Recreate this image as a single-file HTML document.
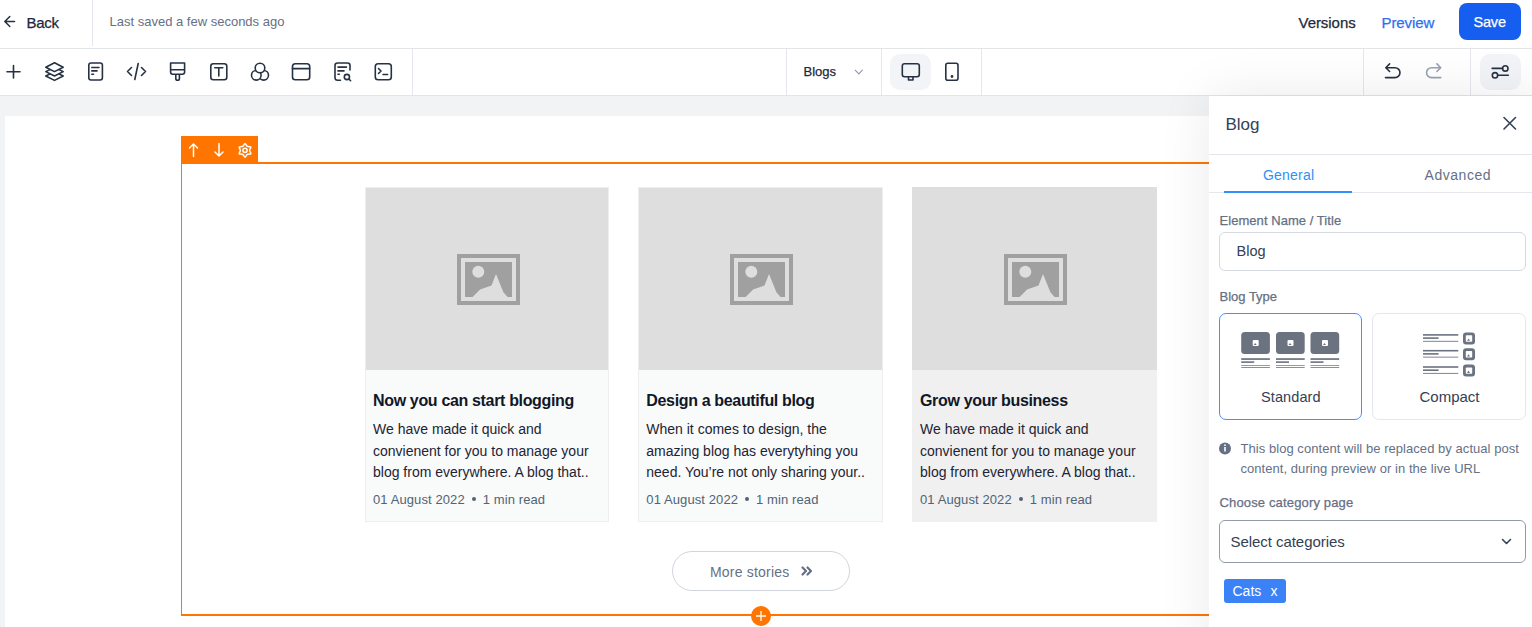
<!DOCTYPE html><html><head><meta charset="utf-8"><style>
html,body{margin:0;padding:0;width:1532px;height:627px;overflow:hidden;background:#fff;font-family:"Liberation Sans",sans-serif;}
.t{position:absolute;white-space:nowrap;}
.r{position:absolute;box-sizing:border-box;}
svg{position:absolute;overflow:visible;}
</style></head><body>

<div class="r" style="left:0px;top:96px;width:1532px;height:531px;background:#f2f3f5;"></div>
<div class="r" style="left:5px;top:116px;width:1520px;height:511px;background:#fff;"></div>
<div class="r" style="left:181px;top:162px;width:1160px;height:454px;border:2px solid #ff7500;border-left:1.3px solid #ff7500;border-right:none;"></div>
<div class="r" style="left:181px;top:136px;width:77px;height:27px;background:#ff7500;"></div>
<div class="r" style="left:365px;top:187px;width:244px;height:335px;background:#f9fafa;border:1px solid #eeeeee;"></div>
<div class="r" style="left:366px;top:188px;width:242px;height:182px;background:#dedede;"></div>
<svg style="left:456.5px;top:254px" width="63" height="51" viewBox="0 0 63 51"><rect x="2" y="2" width="59" height="47" fill="none" stroke="#a0a0a0" stroke-width="4"/><rect x="8" y="8" width="47" height="35" fill="#a0a0a0"/><circle cx="21.3" cy="17.8" r="6" fill="#dedede"/><path d="M15.6 43 L23.1 35.4 L34.5 31.5 L39 20 L46.4 38.2 L50.6 43 Z" fill="#dedede"/></svg>
<div class="t" style="left:373px;top:389.96px;font-size:16px;line-height:21px;color:#101828;font-weight:700;letter-spacing:-0.34px;">Now you can start blogging</div>
<div class="t" style="left:373px;top:420.15px;font-size:14px;line-height:18px;color:#1d2433;font-weight:400;">We have made it quick and</div>
<div class="t" style="left:373px;top:441.55px;font-size:14px;line-height:18px;color:#1d2433;font-weight:400;">convienent for you to manage your</div>
<div class="t" style="left:373px;top:462.95px;font-size:14px;line-height:18px;color:#1d2433;font-weight:400;">blog from everywhere. A blog that..</div>
<div class="t" style="left:373px;top:490.50px;font-size:13px;line-height:17px;color:#4f6475;font-weight:400;letter-spacing:0.1px;">01 August 2022<span style="display:inline-block;width:4px;height:4px;border-radius:2px;background:#4f6475;margin:0 7px 0 7px;vertical-align:3px"></span>1 min read</div>
<div class="r" style="left:638.3px;top:187px;width:244.7px;height:335px;background:#f9fafa;border:1px solid #eeeeee;"></div>
<div class="r" style="left:639.3px;top:188px;width:242.7px;height:182px;background:#dedede;"></div>
<svg style="left:730.1px;top:254px" width="63" height="51" viewBox="0 0 63 51"><rect x="2" y="2" width="59" height="47" fill="none" stroke="#a0a0a0" stroke-width="4"/><rect x="8" y="8" width="47" height="35" fill="#a0a0a0"/><circle cx="21.3" cy="17.8" r="6" fill="#dedede"/><path d="M15.6 43 L23.1 35.4 L34.5 31.5 L39 20 L46.4 38.2 L50.6 43 Z" fill="#dedede"/></svg>
<div class="t" style="left:646.3px;top:389.96px;font-size:16px;line-height:21px;color:#101828;font-weight:700;letter-spacing:-0.34px;">Design a beautiful blog</div>
<div class="t" style="left:646.3px;top:420.15px;font-size:14px;line-height:18px;color:#1d2433;font-weight:400;">When it comes to design, the</div>
<div class="t" style="left:646.3px;top:441.55px;font-size:14px;line-height:18px;color:#1d2433;font-weight:400;">amazing blog has everytyhing you</div>
<div class="t" style="left:646.3px;top:462.95px;font-size:14px;line-height:18px;color:#1d2433;font-weight:400;">need. You’re not only sharing your..</div>
<div class="t" style="left:646.3px;top:490.50px;font-size:13px;line-height:17px;color:#4f6475;font-weight:400;letter-spacing:0.1px;">01 August 2022<span style="display:inline-block;width:4px;height:4px;border-radius:2px;background:#4f6475;margin:0 7px 0 7px;vertical-align:3px"></span>1 min read</div>
<div class="r" style="left:912px;top:187px;width:244.5px;height:335px;background:#f0f0f0;"></div>
<div class="r" style="left:912px;top:187px;width:244.5px;height:183px;background:#dedede;"></div>
<svg style="left:1003.8px;top:254px" width="63" height="51" viewBox="0 0 63 51"><rect x="2" y="2" width="59" height="47" fill="none" stroke="#a0a0a0" stroke-width="4"/><rect x="8" y="8" width="47" height="35" fill="#a0a0a0"/><circle cx="21.3" cy="17.8" r="6" fill="#dedede"/><path d="M15.6 43 L23.1 35.4 L34.5 31.5 L39 20 L46.4 38.2 L50.6 43 Z" fill="#dedede"/></svg>
<div class="t" style="left:920px;top:389.96px;font-size:16px;line-height:21px;color:#101828;font-weight:700;letter-spacing:-0.34px;">Grow your business</div>
<div class="t" style="left:920px;top:420.15px;font-size:14px;line-height:18px;color:#1d2433;font-weight:400;">We have made it quick and</div>
<div class="t" style="left:920px;top:441.55px;font-size:14px;line-height:18px;color:#1d2433;font-weight:400;">convienent for you to manage your</div>
<div class="t" style="left:920px;top:462.95px;font-size:14px;line-height:18px;color:#1d2433;font-weight:400;">blog from everywhere. A blog that..</div>
<div class="t" style="left:920px;top:490.50px;font-size:13px;line-height:17px;color:#4f6475;font-weight:400;letter-spacing:0.1px;">01 August 2022<span style="display:inline-block;width:4px;height:4px;border-radius:2px;background:#4f6475;margin:0 7px 0 7px;vertical-align:3px"></span>1 min read</div>
<div class="r" style="left:672px;top:551px;width:178px;height:40px;border:1px solid #d0d5dd;border-radius:20px;background:#fff;"></div>
<div class="t" style="left:710px;top:563.15px;font-size:14px;line-height:18px;color:#667085;font-weight:400;letter-spacing:0.2px;">More stories</div>
<svg style="left:800.5px;top:566px" width="12" height="10" viewBox="0 0 12 10"><path d="M1.5 1.5 L5 5 L1.5 8.5 M6.5 1.5 L10 5 L6.5 8.5" fill="none" stroke="#667085" stroke-width="2.2" stroke-linecap="round" stroke-linejoin="round"/></svg>
<svg style="left:751px;top:605.5px" width="20" height="20" viewBox="0 0 20 20"><circle cx="10" cy="10" r="10" fill="#ff7500"/><path d="M10 5 V15 M5 10 H15" stroke="#fff" stroke-width="1.3"/></svg>
<svg style="left:181px;top:136px" width="77" height="27" viewBox="0 0 77 27"><g fill="none" stroke="#fff" stroke-width="1.5" stroke-linecap="round" stroke-linejoin="round"><path d="M12.5 20.5 V8 M8.5 12 L12.5 8 L16.5 12"/><path d="M38 7.5 V20 M34 16 L38 20 L42 16"/><path d="M64.00 7.60 C64.69 7.60 65.42 9.91 66.30 10.42 C67.18 10.93 69.54 10.40 69.89 11.00 C70.23 11.60 68.60 13.38 68.60 14.40 C68.60 15.42 70.23 17.20 69.89 17.80 C69.54 18.40 67.18 17.87 66.30 18.38 C65.42 18.89 64.69 21.20 64.00 21.20 C63.31 21.20 62.58 18.89 61.70 18.38 C60.82 17.87 58.46 18.40 58.11 17.80 C57.77 17.20 59.40 15.42 59.40 14.40 C59.40 13.38 57.77 11.60 58.11 11.00 C58.46 10.40 60.82 10.93 61.70 10.42 C62.58 9.91 63.31 7.60 64.00 7.60 Z"/><circle cx="64" cy="14.3" r="2.1"/></g></svg>
<div class="r" style="left:0px;top:0px;width:1532px;height:49px;background:#fff;border-bottom:1px solid #e3e4e6;"></div>
<div class="r" style="left:0px;top:49px;width:1532px;height:47px;background:#fff;border-bottom:1px solid #e3e4e6;"></div>
<div class="r" style="left:92px;top:0px;width:1px;height:46px;background:#e4e7ec;"></div>
<svg style="left:0;top:0" width="30" height="48" viewBox="0 0 30 48"><path d="M14.5 21.5 H4.8 M9.8 16.5 L4.8 21.5 L9.8 26.5" fill="none" stroke="#263244" stroke-width="1.5" stroke-linecap="round" stroke-linejoin="round"/></svg>
<div class="t" style="left:26.5px;top:12.80px;font-size:15px;line-height:20px;color:#1d2939;font-weight:400;letter-spacing:-0.3px;-webkit-text-stroke:0.25px;">Back</div>
<div class="t" style="left:109.5px;top:13.00px;font-size:13px;line-height:17px;color:#667085;font-weight:400;">Last saved a few seconds ago</div>
<div class="t" style="left:1298.5px;top:12.80px;font-size:15px;line-height:20px;color:#1d2939;font-weight:400;letter-spacing:-0.05px;-webkit-text-stroke:0.25px;">Versions</div>
<div class="t" style="left:1381.5px;top:12.80px;font-size:15px;line-height:20px;color:#2f6fed;font-weight:400;letter-spacing:-0.1px;-webkit-text-stroke:0.25px;">Preview</div>
<div class="r" style="left:1459px;top:3px;width:62px;height:37px;background:#155eef;border-radius:8px;"></div>
<div class="t" style="left:1473.5px;top:13.48px;font-size:14.5px;line-height:19px;color:#fff;font-weight:400;letter-spacing:-0.2px;-webkit-text-stroke:0.25px;">Save</div>
<div class="r" style="left:412px;top:49px;width:1px;height:46px;background:#e4e7ec;"></div>
<div class="r" style="left:786px;top:49px;width:1px;height:46px;background:#e4e7ec;"></div>
<div class="r" style="left:881px;top:49px;width:1px;height:46px;background:#e4e7ec;"></div>
<div class="r" style="left:981px;top:49px;width:1px;height:46px;background:#e4e7ec;"></div>
<div class="r" style="left:1363px;top:49px;width:1px;height:46px;background:#e4e7ec;"></div>
<div class="r" style="left:1470px;top:49px;width:1px;height:46px;background:#e4e7ec;"></div>
<div class="r" style="left:890px;top:54px;width:41px;height:36px;background:#f2f4f7;border-radius:10px;"></div>
<div class="r" style="left:1480px;top:54px;width:41px;height:36px;background:#f2f4f7;border-radius:10px;"></div>
<div class="t" style="left:803.5px;top:63.00px;font-size:13px;line-height:17px;color:#1d2939;font-weight:400;-webkit-text-stroke:0.25px;">Blogs</div>
<svg style="left:853px;top:68px" width="12" height="8" viewBox="0 0 12 8"><path d="M2.2 2.2 L5.8 5.8 L9.4 2.2" fill="none" stroke="#8d97a6" stroke-width="1.1" stroke-linecap="round" stroke-linejoin="round"/></svg>
<svg style="left:0;top:0" width="1532" height="96" viewBox="0 0 1532 96"><g fill="none" stroke="#263244" stroke-width="1.6" stroke-linecap="round" stroke-linejoin="round"><path d="M13.5 65.5 V78 M7 71.8 H20"/><path fill="#fff" d="M54.5 71.6 L63.2 76.0 L54.5 80.4 L45.8 76.0 Z"/><path fill="#fff" d="M54.5 67.2 L63.2 71.6 L54.5 76.0 L45.8 71.6 Z"/><path fill="#fff" d="M54.5 62.8 L63.2 67.2 L54.5 71.6 L45.8 67.2 Z"/><rect x="88.8" y="63" width="13.6" height="17" rx="2.2"/><path d="M91.8 67.5 H99 M91.8 70.9 H97 M91.8 74.3 H93.5"/><path d="M131.5 67.5 L127.5 71.5 L131.5 75.5 M141.5 67.5 L145.5 71.5 L141.5 75.5 M138.2 63.5 L134.8 79.5"/><path d="M170.6 63 H184.6 V72 Q184.6 74.2 182.4 74.2 H172.8 Q170.6 74.2 170.6 72 Z M170.6 69.8 H184.6 M175.8 74.2 V78.5 Q175.8 80.3 177.6 80.3 Q179.4 80.3 179.4 78.5 V74.2"/><rect x="210.8" y="63.8" width="16" height="16" rx="2.5"/><path d="M214.8 67.8 H222.8 M218.8 67.8 V76"/><circle cx="263.7" cy="75.3" r="4.8" fill="#fff"/><circle cx="256.3" cy="75.3" r="4.8" fill="#fff"/><circle cx="260" cy="68" r="4.8" fill="#fff"/><rect x="292.5" y="63.8" width="17.2" height="16" rx="2.8"/><path d="M292.5 68.6 H309.7"/><path d="M350 70 V65.5 Q350 63 347.5 63 H337.5 Q335 63 335 65.5 V77.5 Q335 80.2 337.5 80.2 H340.5"/><path d="M338 67.1 H346.5 M338 70.9 H344 M338 74.3 H339.3"/><circle cx="346.9" cy="77" r="2.6"/><path d="M348.9 79 L350.6 80.7"/><rect x="375.3" y="63.8" width="16" height="16" rx="2.8"/><path d="M378.5 68.5 L381 71 L378.5 73.5 M383 74.5 H387.6"/><rect x="902.3" y="63.8" width="17" height="13" rx="2.2"/><path d="M908.5 77 V80 H913 V77"/><rect x="945.8" y="63.3" width="12.2" height="17" rx="2"/><circle cx="952" cy="76.5" r="0.6" fill="#263244"/><path d="M1386 67.7 H1395 A4.95 4.95 0 0 1 1395 77.6 H1385.5 M1389.6 63.9 L1385.8 67.7 L1389.6 71.5"/></g><g fill="none" stroke="#98a2b3" stroke-width="1.6" stroke-linecap="round" stroke-linejoin="round"><path d="M1440.5 67.7 H1431.5 A4.95 4.95 0 0 0 1431.5 77.6 H1440.8 M1436.9 63.9 L1440.7 67.7 L1436.9 71.5"/></g><g fill="none" stroke="#263244" stroke-width="1.6" stroke-linecap="round"><path d="M1492.2 68.4 H1502.5 M1497.7 75.3 H1508.3"/><circle cx="1505.3" cy="68.4" r="2.7"/><circle cx="1495" cy="75.3" r="2.7"/></g></svg>
<div class="r" style="left:1209px;top:96px;width:340px;height:560px;background:#fff;box-shadow:0 0 50px rgba(0,0,0,0.085);"></div>
<div class="t" style="left:1225.5px;top:114.11px;font-size:17px;line-height:22px;color:#344054;font-weight:400;">Blog</div>
<svg style="left:1500px;top:114px" width="20" height="20" viewBox="0 0 20 20"><path d="M4 3.5 L15.5 15 M15.5 3.5 L4 15" stroke="#344054" stroke-width="1.6" stroke-linecap="round"/></svg>
<div class="r" style="left:1209px;top:154px;width:323px;height:1px;background:#e4e7ec;"></div>
<div class="t" style="left:1263px;top:165.65px;font-size:14px;line-height:18px;color:#2e90fa;font-weight:400;letter-spacing:0.2px;">General</div>
<div class="t" style="left:1424.5px;top:165.65px;font-size:14px;line-height:18px;color:#667085;font-weight:400;letter-spacing:0.55px;">Advanced</div>
<div class="r" style="left:1209px;top:192px;width:323px;height:1px;background:#e4e7ec;"></div>
<div class="r" style="left:1224px;top:191px;width:128px;height:2px;background:#2e90fa;"></div>
<div class="t" style="left:1219.5px;top:212.00px;font-size:13px;line-height:17px;color:#667085;font-weight:400;letter-spacing:0.05px;-webkit-text-stroke:0.25px;">Element Name / Title</div>
<div class="r" style="left:1219px;top:232px;width:307px;height:39px;border:1px solid #d5d9e0;border-radius:6px;"></div>
<div class="t" style="left:1236.5px;top:242.48px;font-size:14.5px;line-height:19px;color:#344054;font-weight:400;">Blog</div>
<div class="t" style="left:1219.5px;top:288.00px;font-size:13px;line-height:17px;color:#667085;font-weight:400;-webkit-text-stroke:0.25px;">Blog Type</div>
<div class="r" style="left:1219px;top:313px;width:143px;height:107px;border:1.5px solid #528bf7;border-radius:7px;"></div>
<div class="r" style="left:1372px;top:313px;width:154px;height:107px;border:1px solid #e4e7ec;border-radius:7px;"></div>
<div class="t" style="left:1261px;top:387.98px;font-size:14.5px;line-height:19px;color:#344054;font-weight:400;letter-spacing:0.1px;">Standard</div>
<div class="t" style="left:1419.5px;top:386.80px;font-size:15px;line-height:20px;color:#344054;font-weight:400;">Compact</div>
<svg style="left:0;top:0" width="1532" height="627" viewBox="0 0 1532 627"><rect x="1241.2" y="332" width="28.7" height="22" rx="3.5" fill="#6b7280"/><rect x="1252.7" y="340" width="6" height="6" rx="1" fill="#fff"/><path d="M1253.7 345 L1255.2 343 L1256.7 345 Z" fill="#6b7280"/><rect x="1241.2" y="358.2" width="28.7" height="1.7" fill="#6b7280"/><rect x="1241.2" y="361.3" width="13" height="1.6" fill="#6b7280"/><rect x="1241.2" y="365" width="28.7" height="0.9" fill="#8a909b"/><rect x="1241.2" y="367" width="28.7" height="1" fill="#8a909b"/><rect x="1276" y="332" width="28.7" height="22" rx="3.5" fill="#6b7280"/><rect x="1287.5" y="340" width="6" height="6" rx="1" fill="#fff"/><path d="M1288.5 345 L1290 343 L1291.5 345 Z" fill="#6b7280"/><rect x="1276" y="358.2" width="28.7" height="1.7" fill="#6b7280"/><rect x="1276" y="361.3" width="13" height="1.6" fill="#6b7280"/><rect x="1276" y="365" width="28.7" height="0.9" fill="#8a909b"/><rect x="1276" y="367" width="28.7" height="1" fill="#8a909b"/><rect x="1310.5" y="332" width="28.7" height="22" rx="3.5" fill="#6b7280"/><rect x="1322.0" y="340" width="6" height="6" rx="1" fill="#fff"/><path d="M1323.0 345 L1324.5 343 L1326.0 345 Z" fill="#6b7280"/><rect x="1310.5" y="358.2" width="28.7" height="1.7" fill="#6b7280"/><rect x="1310.5" y="361.3" width="13" height="1.6" fill="#6b7280"/><rect x="1310.5" y="365" width="28.7" height="0.9" fill="#8a909b"/><rect x="1310.5" y="367" width="28.7" height="1" fill="#8a909b"/><rect x="1423" y="334.1" width="35.3" height="1.6" fill="#6b7280"/><rect x="1423" y="337.3" width="15.6" height="1.6" fill="#6b7280"/><rect x="1423" y="340.8" width="35.3" height="1.1" fill="#8a909b"/><rect x="1463" y="332.5" width="12" height="12" rx="3" fill="#6b7280"/><rect x="1465.8" y="335.3" width="6.4" height="6.4" rx="0.8" fill="#fff"/><path d="M1467 340.8 L1468.5 338.5 L1470 340.8 Z" fill="#6b7280"/><rect x="1423" y="349.90000000000003" width="35.3" height="1.6" fill="#6b7280"/><rect x="1423" y="353.1" width="15.6" height="1.6" fill="#6b7280"/><rect x="1423" y="356.6" width="35.3" height="1.1" fill="#8a909b"/><rect x="1463" y="348.3" width="12" height="12" rx="3" fill="#6b7280"/><rect x="1465.8" y="351.1" width="6.4" height="6.4" rx="0.8" fill="#fff"/><path d="M1467 356.6 L1468.5 354.3 L1470 356.6 Z" fill="#6b7280"/><rect x="1423" y="366.20000000000005" width="35.3" height="1.6" fill="#6b7280"/><rect x="1423" y="369.40000000000003" width="15.6" height="1.6" fill="#6b7280"/><rect x="1423" y="372.90000000000003" width="35.3" height="1.1" fill="#8a909b"/><rect x="1463" y="364.6" width="12" height="12" rx="3" fill="#6b7280"/><rect x="1465.8" y="367.40000000000003" width="6.4" height="6.4" rx="0.8" fill="#fff"/><path d="M1467 372.90000000000003 L1468.5 370.6 L1470 372.90000000000003 Z" fill="#6b7280"/><circle cx="1225" cy="448.4" r="6" fill="#667085"/><rect x="1224.2" y="447" width="1.6" height="4.5" fill="#fff"/><circle cx="1225" cy="445.2" r="0.9" fill="#fff"/><path d="M1502.5 539.5 L1506.5 543.5 L1510.5 539.5" fill="none" stroke="#344054" stroke-width="1.6" stroke-linecap="round" stroke-linejoin="round"/></svg>
<div class="t" style="left:1240.5px;top:440.00px;font-size:13px;line-height:17px;color:#667085;font-weight:400;letter-spacing:0.05px;">This blog content will be replaced by actual post</div>
<div class="t" style="left:1240.5px;top:459.50px;font-size:13px;line-height:17px;color:#667085;font-weight:400;letter-spacing:0.05px;">content, during preview or in the live URL</div>
<div class="t" style="left:1219.5px;top:494.00px;font-size:13px;line-height:17px;color:#667085;font-weight:400;letter-spacing:0.15px;-webkit-text-stroke:0.25px;">Choose category page</div>
<div class="r" style="left:1219px;top:520px;width:307px;height:43px;border:1px solid #949cab;border-radius:6px;"></div>
<div class="t" style="left:1230.5px;top:531.80px;font-size:15px;line-height:20px;color:#344054;font-weight:400;letter-spacing:-0.05px;">Select categories</div>
<div class="r" style="left:1224px;top:579px;width:62px;height:24px;background:#3b82f6;border-radius:3px;"></div>
<div class="t" style="left:1232.5px;top:582.15px;font-size:14px;line-height:18px;color:#fff;font-weight:400;">Cats</div>
<div class="t" style="left:1270.5px;top:582.15px;font-size:14px;line-height:18px;color:#fff;font-weight:400;">x</div>
</body></html>
